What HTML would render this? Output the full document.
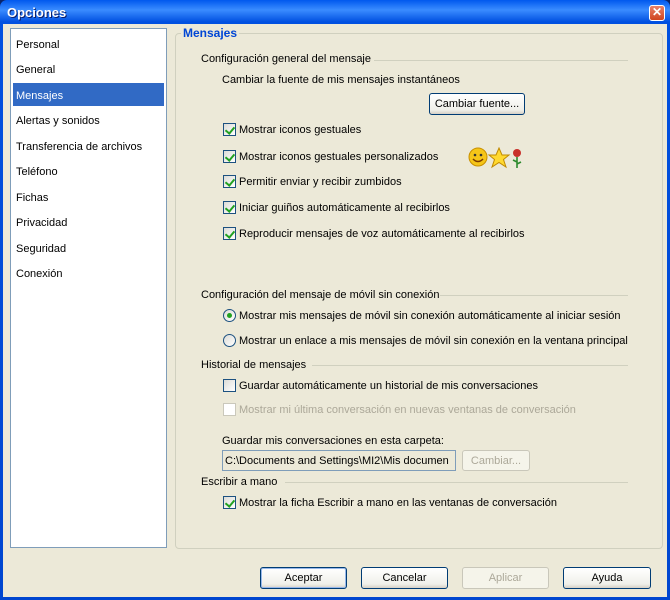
<!DOCTYPE html>
<html><head><meta charset="utf-8"><style>
*{margin:0;padding:0;box-sizing:border-box}
body{width:670px;height:600px;overflow:hidden;font-family:"Liberation Sans",sans-serif;font-size:11px;color:#000;background:#0a246a}
.win{position:absolute;left:0;top:0;width:670px;height:600px;background:linear-gradient(#0058ee,#3a8cff 10px,#0050e0 22px,#0046d0);border-radius:7px 7px 0 0}
.title{position:absolute;left:7px;top:5px;color:#fff;font-weight:bold;font-size:13px;text-shadow:1px 1px #0a1e6a}
.close{position:absolute;left:649px;top:5px;width:16px;height:16px;background:linear-gradient(#e8826a,#d0451f);border:1px solid #fff;border-radius:3px;color:#fff;font-size:12px;line-height:13px;text-align:center;font-weight:bold}
.body{position:absolute;left:3px;top:24px;width:664px;height:573px;background:#ece9d8}
.a{position:absolute;white-space:nowrap}
.list{position:absolute;left:10px;top:28px;width:157px;height:520px;background:#fff;border:1px solid #7f9db9}
.list div{position:absolute;left:5px}
.sel{position:absolute;left:2px;top:54px;width:151px;height:23px;background:#316ac5}
.grp{position:absolute;left:175px;top:33px;width:488px;height:516px;border:1px solid #d0d0bf;border-radius:4px}
.gt{position:absolute;left:181px;top:26px;background:#ece9d8;padding:0 2px;color:#0046d5;font-weight:bold;font-size:12px}
.line{position:absolute;height:1px;background:#d0d0bf}
.cb{position:absolute;width:13px;height:13px;border:1px solid #1c5180;background:linear-gradient(135deg,#dcdcd7,#fff)}
.cb.c::after{content:"";position:absolute;left:3px;top:1px;width:4px;height:7px;border:solid #21a121;border-width:0 2px 2px 0;transform:rotate(40deg)}
.cb.d{border-color:#cac8bb;background:#fff}
.rb{position:absolute;width:13px;height:13px;border:1px solid #1c5180;border-radius:50%;background:linear-gradient(135deg,#dcdcd7,#fff)}
.rb.c::after{content:"";position:absolute;left:3px;top:3px;width:5px;height:5px;border-radius:50%;background:#21a121}
.btn{position:absolute;height:22px;border:1px solid #003c74;border-radius:3px;background:linear-gradient(#fff,#f0f0ea 80%,#d6d0c5);text-align:center;line-height:20px}
.btn.dis{border-color:#c9c7ba;color:#aca899;background:#f5f4ea}
.gray{color:#aca899}
</style></head><body>
<div class="win">
<div class="title">Opciones</div>
<div class="close">✕</div>
<div class="body"></div>
<div class="list">
<div class="sel" style="left:2px"></div>
<div style="top:10px">Personal</div>
<div style="top:35px">General</div>
<div style="top:61px;color:#fff">Mensajes</div>
<div style="top:86px">Alertas y sonidos</div>
<div style="top:112px">Transferencia de archivos</div>
<div style="top:137px">Teléfono</div>
<div style="top:163px">Fichas</div>
<div style="top:188px">Privacidad</div>
<div style="top:214px">Seguridad</div>
<div style="top:239px">Conexión</div>
</div>
<div class="grp"></div>
<div class="gt">Mensajes</div>

<div class="a" style="left:201px;top:53px">Configuración general del mensaje</div>
<div class="line" style="left:374px;top:60px;width:254px"></div>
<div class="a" style="left:222px;top:74px">Cambiar la fuente de mis mensajes instantáneos</div>
<div class="btn" style="left:429px;top:93px;width:96px">Cambiar fuente...</div>

<div class="cb c" style="left:223px;top:123px"></div><div class="a" style="left:239px;top:124px">Mostrar iconos gestuales</div>
<div class="cb c" style="left:223px;top:150px"></div><div class="a" style="left:239px;top:151px">Mostrar iconos gestuales personalizados</div>
<svg class="a" style="left:468px;top:147px" width="58" height="22" viewBox="0 0 58 22">
<circle cx="10" cy="10" r="9" fill="#f5c518" stroke="#c89000"/>
<circle cx="7" cy="8" r="1.3" fill="#333"/><circle cx="13" cy="8" r="1.3" fill="#333"/>
<path d="M5 12 Q10 17 15 12" stroke="#7a3a00" stroke-width="1.5" fill="none"/>
<path d="M31 1 L34 8 L41 8 L35.5 12.5 L38 20 L31 15.5 L24 20 L26.5 12.5 L21 8 L28 8 Z" fill="#ffd930" stroke="#c08a00"/>
<circle cx="49" cy="6" r="4" fill="#c8302a"/>
<path d="M49 10 L49 21 M49 15 L45 13 M49 17 L53 15" stroke="#2d8a2d" stroke-width="1.6"/>
</svg>
<div class="cb c" style="left:223px;top:175px"></div><div class="a" style="left:239px;top:176px">Permitir enviar y recibir zumbidos</div>
<div class="cb c" style="left:223px;top:201px"></div><div class="a" style="left:239px;top:202px">Iniciar guiños automáticamente al recibirlos</div>
<div class="cb c" style="left:223px;top:227px"></div><div class="a" style="left:239px;top:228px">Reproducir mensajes de voz automáticamente al recibirlos</div>

<div class="a" style="left:201px;top:289px">Configuración del mensaje de móvil sin conexión</div>
<div class="line" style="left:440px;top:295px;width:188px"></div>
<div class="rb c" style="left:223px;top:309px"></div><div class="a" style="left:239px;top:310px">Mostrar mis mensajes de móvil sin conexión automáticamente al iniciar sesión</div>
<div class="rb" style="left:223px;top:334px"></div><div class="a" style="left:239px;top:335px">Mostrar un enlace a mis mensajes de móvil sin conexión en la ventana principal</div>

<div class="a" style="left:201px;top:359px">Historial de mensajes</div>
<div class="line" style="left:312px;top:365px;width:316px"></div>
<div class="cb" style="left:223px;top:379px"></div><div class="a" style="left:239px;top:380px">Guardar automáticamente un historial de mis conversaciones</div>
<div class="cb d" style="left:223px;top:403px"></div><div class="a gray" style="left:239px;top:404px">Mostrar mi última conversación en nuevas ventanas de conversación</div>
<div class="a" style="left:222px;top:435px">Guardar mis conversaciones en esta carpeta:</div>
<div class="a" style="left:222px;top:450px;width:234px;height:21px;border:1px solid #7f9db9;background:#ece9d8;padding:4px 2px;overflow:hidden">C:\Documents and Settings\MI2\Mis documen</div>
<div class="btn dis" style="left:462px;top:450px;width:68px;height:21px">Cambiar...</div>

<div class="a" style="left:201px;top:476px">Escribir a mano</div>
<div class="line" style="left:285px;top:482px;width:343px"></div>
<div class="cb c" style="left:223px;top:496px"></div><div class="a" style="left:239px;top:497px">Mostrar la ficha Escribir a mano en las ventanas de conversación</div>

<div class="btn" style="left:260px;top:567px;width:87px;border-color:#003c74;box-shadow:inset 0 0 0 1px #98b8ea">Aceptar</div>
<div class="btn" style="left:361px;top:567px;width:87px">Cancelar</div>
<div class="btn dis" style="left:462px;top:567px;width:87px">Aplicar</div>
<div class="btn" style="left:563px;top:567px;width:88px">Ayuda</div>
</div>
</body></html>
